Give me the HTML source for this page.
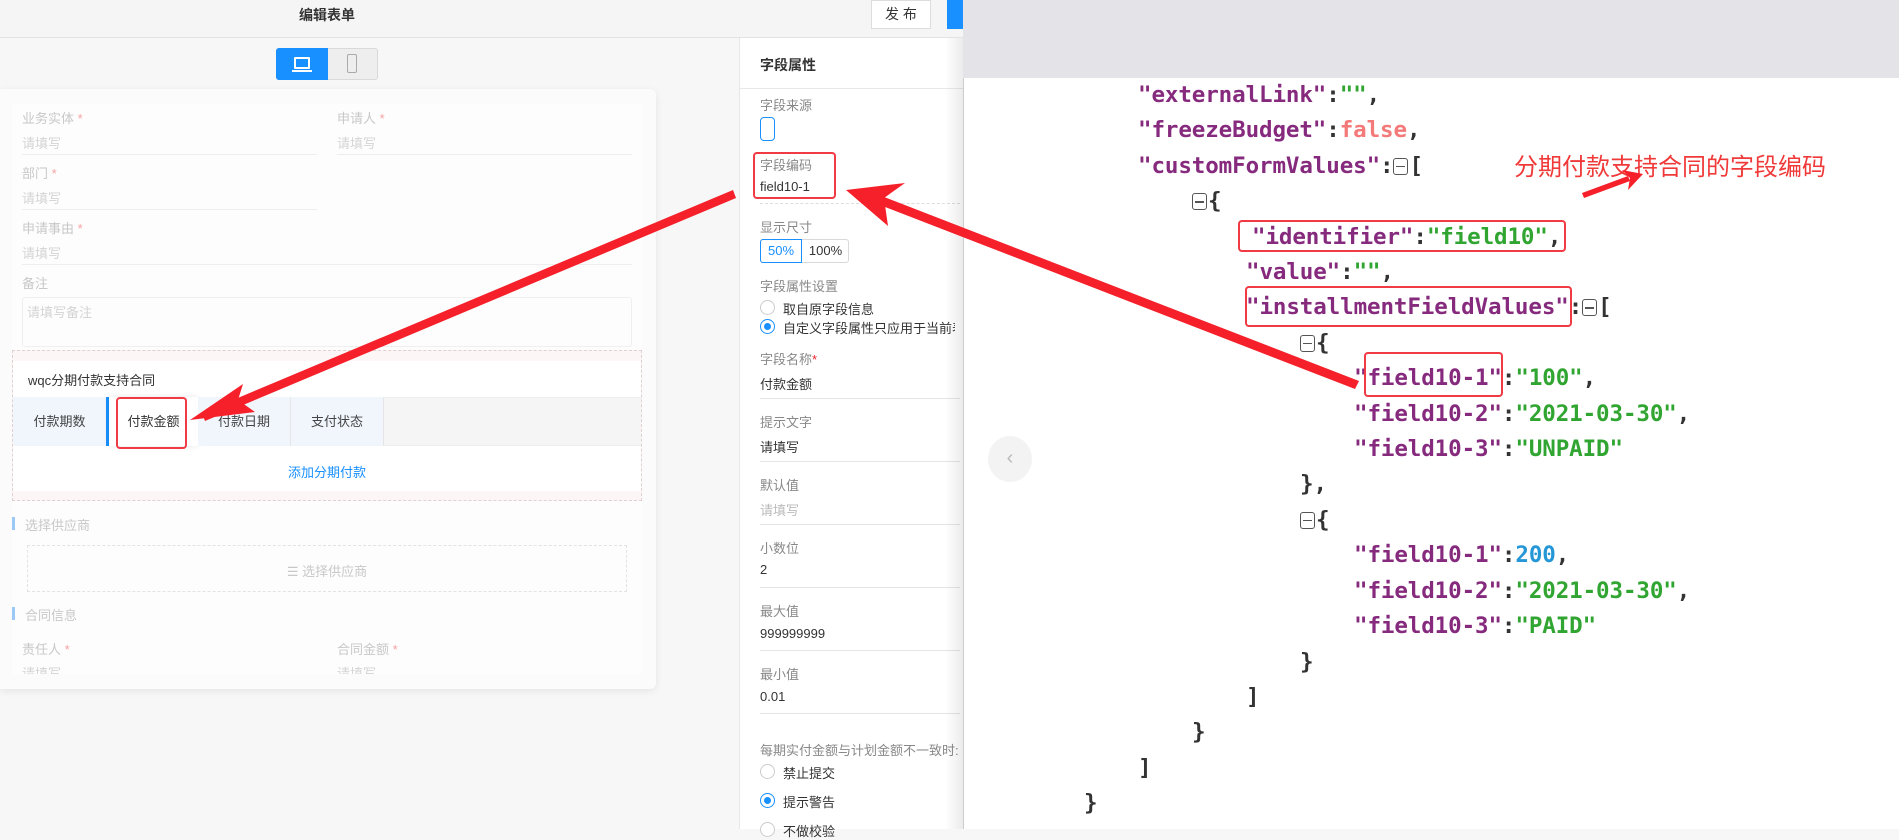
<!DOCTYPE html>
<html><head><meta charset="utf-8"><style>
*{margin:0;padding:0;box-sizing:border-box}
body{width:1899px;height:829px;overflow:hidden;position:relative;background:#f7f7f7;font-family:"Liberation Sans","Noto Sans CJK SC",sans-serif;font-size:13px;color:#333}
.a{position:absolute;white-space:nowrap}
.lbl{color:#c8c8c8}
.ph{color:#d4d4d4}
.ln{position:absolute;height:1px;background:#eee}
.st{color:#f5a3a3}
.ml{color:#888}
.mv{color:#333}
.mln{position:absolute;left:760px;width:200px;height:1px;background:#e4e4e4}
.radio{position:absolute;width:15px;height:15px;border:1px solid #ccc;border-radius:50%;background:#fff}
.radio.on{border-color:#1890ff}
.radio.on::after{content:"";position:absolute;left:3px;top:3px;width:7px;height:7px;border-radius:50%;background:#1890ff}
.code{position:absolute;font-family:"DejaVu Sans Mono","Liberation Mono",monospace;font-weight:bold;font-size:22.5px;line-height:35.4px;white-space:pre;color:#333;letter-spacing:-0.1px}
.k{color:#862a7e}.s{color:#31a531}.f{color:#f47a7a}.n{color:#2597d6}
.box{display:inline-block;border:1.5px solid #555;border-radius:3px;width:15px;height:17px;vertical-align:-2px;position:relative;margin-right:1px}
.box::after{content:"";position:absolute;left:2px;right:2px;top:7px;height:1.5px;background:#555}
.rb{position:absolute;border:2.5px solid #f03a44;border-radius:4px}
</style></head><body>
<div class="a" style="left:0;top:0;width:963px;height:38px;background:#f5f5f5;border-bottom:1px solid #e3e3e3"></div>
<div class="a" style="left:299px;top:5px;font-weight:bold;font-size:14px;color:#333">编辑表单</div>
<div class="a" style="left:871px;top:0;width:60px;height:29px;border:1px solid #ddd;background:#fff;text-align:center;line-height:27px;font-size:14px;color:#333">发 布</div>
<div class="a" style="left:947px;top:0;width:16px;height:29px;background:#1890ff"></div>
<div class="a" style="left:276px;top:48px;width:102px;height:32px;border:1px solid #d9d9d9;border-radius:3px;background:#eee"></div>
<div class="a" style="left:276px;top:48px;width:52px;height:32px;background:#1890ff;border-radius:3px 0 0 3px"></div>
<div class="a" style="left:294px;top:57px;width:16px;height:12px;border:2px solid #fff;border-radius:1px"></div>
<div class="a" style="left:292px;top:70px;width:20px;height:2px;background:#fff"></div>
<div class="a" style="left:347px;top:54px;width:10px;height:19px;border:1.5px solid #aaa;border-radius:2px"></div>
<div class="a" style="left:0;top:89px;width:656px;height:600px;background:#fbfbfb;border-radius:0 6px 6px 0;box-shadow:0 2px 8px rgba(0,0,0,.08)"></div>
<div class="a" style="left:12px;top:104px;width:630px;height:570px;background:#fdfdfd"></div>
<div class="a lbl" style="left:22px;top:108px">业务实体 <span class="st">*</span></div>
<div class="a lbl" style="left:337px;top:108px">申请人 <span class="st">*</span></div>
<div class="a ph" style="left:22px;top:133px">请填写</div>
<div class="a ph" style="left:337px;top:133px">请填写</div>
<div class="ln" style="left:22px;top:154px;width:295px"></div>
<div class="ln" style="left:337px;top:154px;width:295px"></div>
<div class="a lbl" style="left:22px;top:163px">部门 <span class="st">*</span></div>
<div class="a ph" style="left:22px;top:188px">请填写</div>
<div class="ln" style="left:22px;top:209px;width:295px"></div>
<div class="a lbl" style="left:22px;top:218px">申请事由 <span class="st">*</span></div>
<div class="a ph" style="left:22px;top:243px">请填写</div>
<div class="ln" style="left:22px;top:264px;width:610px"></div>
<div class="a lbl" style="left:22px;top:273px">备注</div>
<div class="a" style="left:22px;top:297px;width:610px;height:50px;border:1px solid #efefef;border-radius:3px"></div>
<div class="a ph" style="left:27px;top:302px">请填写备注</div>
<div class="a" style="left:12px;top:350px;width:630px;height:151px;border:1px dashed #e0d0d0;background:#fdf6f6"></div>
<div class="a" style="left:13px;top:361px;width:628px;height:130px;background:#fff"></div>
<div class="a" style="left:28px;top:370px;color:#333">wqc分期付款支持合同</div>
<div class="a" style="left:13px;top:397px;width:628px;height:49px;background:#f5f5f5;border-top:1px solid #eee;border-bottom:1px solid #eee"></div>
<div class="a" style="left:13px;top:397px;width:93px;height:49px;background:#f1f6fc;text-align:center;line-height:49px;color:#444">付款期数</div>
<div class="a" style="left:106px;top:397px;width:3px;height:49px;background:#1890ff"></div>
<div class="a" style="left:109px;top:397px;width:89px;height:49px;background:#fff;text-align:center;line-height:49px;color:#333;box-shadow:0 0 6px rgba(0,0,0,.1)">付款金额</div>
<div class="a" style="left:198px;top:397px;width:93px;height:49px;background:#f1f6fc;border-right:1px solid #e6e6e6;text-align:center;line-height:49px;color:#444">付款日期</div>
<div class="a" style="left:291px;top:397px;width:93px;height:49px;background:#f1f6fc;border-right:1px solid #e6e6e6;text-align:center;line-height:49px;color:#444">支付状态</div>
<div class="rb" style="left:116px;top:397px;width:71px;height:52px"></div>
<div class="a" style="left:0;top:462px;width:654px;text-align:center;color:#1890ff">添加分期付款</div>
<div class="a" style="left:12px;top:517px;width:3px;height:13px;background:#9cc8f5"></div>
<div class="a lbl" style="left:25px;top:515px">选择供应商</div>
<div class="a" style="left:27px;top:545px;width:600px;height:47px;border:1px dashed #e3e3e3"></div>
<div class="a lbl" style="left:0;top:561px;width:654px;text-align:center">☰ 选择供应商</div>
<div class="a" style="left:12px;top:607px;width:3px;height:13px;background:#9cc8f5"></div>
<div class="a lbl" style="left:25px;top:605px">合同信息</div>
<div class="a lbl" style="left:22px;top:639px">责任人 <span class="st">*</span></div>
<div class="a lbl" style="left:337px;top:639px">合同金额 <span class="st">*</span></div>
<div class="a" style="left:12px;top:660px;width:630px;height:14px;overflow:hidden"><div class="a ph" style="left:10px;top:3px">请填写</div><div class="a ph" style="left:325px;top:3px">请填写</div></div>
<div class="a" style="left:739px;top:38px;width:224px;height:791px;background:#fff;border-left:1px solid #e8e8e8"></div>
<div class="a" style="left:760px;top:55px;font-weight:bold;font-size:14px;color:#333">字段属性</div>
<div class="a" style="left:740px;top:88px;width:223px;height:1px;background:#e8e8e8"></div>
<div class="a ml" style="left:760px;top:95px">字段来源</div>
<div class="a" style="left:760px;top:117px;width:15px;height:24px;border:1px solid #1890ff;border-radius:4px"></div>
<div class="a ml" style="left:760px;top:155px">字段编码</div>
<div class="a mv" style="left:760px;top:179px">field10-1</div>
<div class="rb" style="left:753px;top:152px;width:83px;height:47px"></div>
<div class="a" style="left:760px;top:203px;width:200px;border-top:1px dashed #ddd"></div>
<div class="a ml" style="left:760px;top:217px">显示尺寸</div>
<div class="a" style="left:760px;top:239px;width:89px;height:24px;border:1px solid #d9d9d9;border-radius:3px"></div>
<div class="a" style="left:760px;top:239px;width:42px;height:24px;border:1px solid #1890ff;border-radius:3px 0 0 3px;color:#1890ff;text-align:center;line-height:22px">50%</div>
<div class="a mv" style="left:802px;top:239px;width:47px;text-align:center;line-height:24px">100%</div>
<div class="a ml" style="left:760px;top:276px">字段属性设置</div>
<div class="radio" style="left:760px;top:300px"></div>
<div class="a mv" style="left:783px;top:299px">取自原字段信息</div>
<div class="radio on" style="left:760px;top:319px"></div>
<div class="a mv" style="left:783px;top:318px;width:172px;overflow:hidden">自定义字段属性只应用于当前表单</div>
<div class="a ml" style="left:760px;top:349px">字段名称<span style="color:#f5222d">*</span></div>
<div class="a mv" style="left:760px;top:374px">付款金额</div>
<div class="mln" style="top:398px"></div>
<div class="a ml" style="left:760px;top:412px">提示文字</div>
<div class="a mv" style="left:760px;top:437px">请填写</div>
<div class="mln" style="top:461px"></div>
<div class="a ml" style="left:760px;top:475px">默认值</div>
<div class="a" style="left:760px;top:500px;color:#bbb">请填写</div>
<div class="mln" style="top:524px"></div>
<div class="a ml" style="left:760px;top:538px">小数位</div>
<div class="a mv" style="left:760px;top:562px">2</div>
<div class="mln" style="top:587px"></div>
<div class="a ml" style="left:760px;top:601px">最大值</div>
<div class="a mv" style="left:760px;top:626px">999999999</div>
<div class="mln" style="top:650px"></div>
<div class="a ml" style="left:760px;top:664px">最小值</div>
<div class="a mv" style="left:760px;top:689px">0.01</div>
<div class="mln" style="top:713px"></div>
<div class="a ml" style="left:760px;top:740px;width:200px;overflow:hidden">每期实付金额与计划金额不一致时:</div>
<div class="radio" style="left:760px;top:764px"></div>
<div class="a mv" style="left:783px;top:763px">禁止提交</div>
<div class="radio on" style="left:760px;top:793px"></div>
<div class="a mv" style="left:783px;top:792px">提示警告</div>
<div class="radio" style="left:760px;top:822px"></div>
<div class="a mv" style="left:783px;top:821px">不做校验</div>
<div class="a" style="left:945px;top:38px;width:18px;height:791px;background:linear-gradient(to right,rgba(0,0,0,0),rgba(0,0,0,.08))"></div>
<div class="a" style="left:963px;top:0;width:936px;height:829px;background:#fff;border-left:1px solid #ccc"></div>
<div class="a" style="left:963px;top:0;width:936px;height:78px;background:#e3e3e8"></div>
<div class="a" style="left:988px;top:436px;width:44px;height:46px;border-radius:50%;background:#f3f3f3;color:#bbb;text-align:center;line-height:44px;font-size:20px">‹</div>
<div class="code" style="left:1084px;top:78px"><span style="padding-left:54px"></span><span class="k">"externalLink"</span>:<span class="s">""</span>,
<span style="padding-left:54px"></span><span class="k">"freezeBudget"</span>:<span class="f">false</span>,
<span style="padding-left:54px"></span><span class="k">"customFormValues"</span>:<span class="box"></span>[
<span style="padding-left:108px"></span><span class="box"></span>{
<span style="padding-left:168px"></span><span class="k">"identifier"</span>:<span class="s">"field10"</span>,
<span style="padding-left:162px"></span><span class="k">"value"</span>:<span class="s">""</span>,
<span style="padding-left:162px"></span><span class="k">"installmentFieldValues"</span>:<span class="box"></span>[
<span style="padding-left:216px"></span><span class="box"></span>{
<span style="padding-left:270px"></span><span class="k">"field10-1"</span>:<span class="s">"100"</span>,
<span style="padding-left:270px"></span><span class="k">"field10-2"</span>:<span class="s">"2021-03-30"</span>,
<span style="padding-left:270px"></span><span class="k">"field10-3"</span>:<span class="s">"UNPAID"</span>
<span style="padding-left:216px"></span>},
<span style="padding-left:216px"></span><span class="box"></span>{
<span style="padding-left:270px"></span><span class="k">"field10-1"</span>:<span class="n">200</span>,
<span style="padding-left:270px"></span><span class="k">"field10-2"</span>:<span class="s">"2021-03-30"</span>,
<span style="padding-left:270px"></span><span class="k">"field10-3"</span>:<span class="s">"PAID"</span>
<span style="padding-left:216px"></span>}
<span style="padding-left:162px"></span>]
<span style="padding-left:108px"></span>}
<span style="padding-left:54px"></span>]
}</div>
<div class="rb" style="left:1238px;top:220px;width:328px;height:32px"></div>
<div class="rb" style="left:1245px;top:286px;width:327px;height:41px"></div>
<div class="rb" style="left:1364px;top:352px;width:139px;height:45px"></div>
<div class="a" style="left:1514px;top:149px;font-size:24px;color:#f03a3a;font-family:'Noto Sans CJK SC',sans-serif;line-height:32px">分期付款支持合同的字段编码</div>
<svg class="a" style="left:0;top:0" width="1899" height="829">
<g fill="#f5202a">
<polygon points="733,190 736,198 205,421 202,413"/>
<polygon points="190,420 243,384 238,400 255,412"/>
<polygon points="1359,381 1355,389 862,198 866,190"/>
<polygon points="846,190 905,183 884,198 888,226"/>
<polygon points="1584,198 1582,193 1628,176 1630,181"/>
<polygon points="1643,174 1622,170 1630,178 1628,190"/>
</g>
</svg>
</body></html>
